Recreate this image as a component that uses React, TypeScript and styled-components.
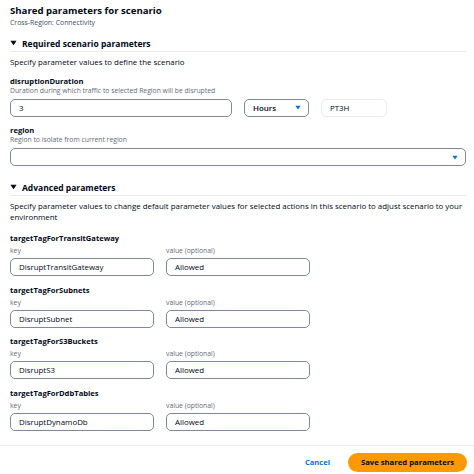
import React from 'react';
import styled, { createGlobalStyle } from 'styled-components';

const GlobalStyle = createGlobalStyle`
  html, body {
    margin: 0;
    padding: 0;
    background: #ffffff;
  }
  body {
    font-family: "Open Sans", "Noto Sans", sans-serif;
    color: #000716;
  }
`;

const Page = styled.div`
  width: 474px;
  height: 474px;
  overflow: hidden;
  display: flex;
  flex-direction: column;
`;

const Body = styled.div`
  padding: 4px 8px 0 10px;
  flex: 1;
`;

const Title = styled.h1`
  margin: 0;
  font-size: 9.6px;
  line-height: 14px;
  font-weight: 700;
`;

const Subtitle = styled.div`
  font-size: 6.9px;
  line-height: 9px;
  color: #414d5c;
`;

const SectionHeader = styled.div<{ $top: number }>`
  margin-top: ${(p) => p.$top}px;
  display: flex;
  align-items: center;
  gap: 5px;
  height: 12px;
  font-size: 8.5px;
  font-weight: 700;
  padding-bottom: 2px;
  border-bottom: 1px solid #e9ebed;
`;

const Caret = styled.svg`
  width: 7px;
  height: 6px;
  flex: none;
`;

const Description = styled.p`
  margin: 5px 0 0;
  font-size: 7.9px;
  line-height: 11px;
`;

const Field = styled.div<{ $top: number }>`
  margin-top: ${(p) => p.$top}px;
`;

const Label = styled.div`
  font-size: 7.6px;
  line-height: 10px;
  font-weight: 700;
`;

const Help = styled.div`
  font-size: 6.8px;
  line-height: 10px;
  color: #5f6b7a;
`;

const Row = styled.div`
  display: flex;
  align-items: center;
  gap: 12px;
  margin-top: 3px;
`;

const Input = styled.div<{ $w: number; $muted?: boolean }>`
  box-sizing: border-box;
  width: ${(p) => p.$w}px;
  height: 18px;
  border: 1px solid ${(p) => (p.$muted ? '#e9ebed' : '#7d8998')};
  border-radius: 5px;
  padding: 0 8px;
  display: flex;
  align-items: center;
  font-size: 7.9px;
  font-weight: 500;
  color: #000716;
`;

const Select = styled(Input)`
  justify-content: space-between;
  padding-right: 7px;
  font-weight: 600;
`;

const SelectCaret = () => (
  <Caret viewBox="0 0 8 6" style={{ width: 6, height: 5 }}>
    <path d="M0.5 0.5 L7.5 0.5 L4 5.5 Z" fill="#0972d3" />
  </Caret>
);

const TagGroup = styled.div<{ $top: number }>`
  margin-top: ${(p) => p.$top}px;
`;

const TagCols = styled.div`
  display: grid;
  grid-template-columns: 144px 144px;
  column-gap: 12px;
`;

const SmallLabel = styled.div`
  font-size: 6.8px;
  line-height: 9px;
  color: #5f6b7a;
  margin-top: 3px;
  margin-bottom: 3px;
`;

const Footer = styled.div`
  box-sizing: border-box;
  border-top: 1px solid #e9ebed;
  height: 29px;
  padding: 4px 7px 0 0;
  display: flex;
  align-items: center;
  justify-content: flex-end;
  gap: 18px;
`;

const LinkButton = styled.button`
  background: none;
  border: none;
  padding: 0;
  font-family: inherit;
  font-size: 7.6px;
  font-weight: 700;
  color: #0972d3;
`;

const PrimaryButton = styled.button`
  background: #ff9900;
  border: none;
  border-radius: 10px;
  height: 19px;
  width: 119px;
  padding: 0;
  font-family: inherit;
  font-size: 7.7px;
  font-weight: 700;
  color: #000716;
`;

const tags = [
  { name: 'targetTagForTransitGateway', key: 'DisruptTransitGateway' },
  { name: 'targetTagForSubnets', key: 'DisruptSubnet' },
  { name: 'targetTagForS3Buckets', key: 'DisruptS3' },
  { name: 'targetTagForDdbTables', key: 'DisruptDynamoDb' },
];

const Expand = () => (
  <Caret viewBox="0 0 8 6">
    <path d="M0.5 0.5 L7.5 0.5 L4 5.5 Z" fill="#000716" />
  </Caret>
);

export default function App() {
  return (
    <Page>
      <GlobalStyle />
      <Body>
        <Title>Shared parameters for scenario</Title>
        <Subtitle>Cross-Region: Connectivity</Subtitle>

        <SectionHeader $top={10}>
          <Expand />
          Required scenario parameters
        </SectionHeader>
        <Description>Specify parameter values to define the scenario</Description>

        <Field $top={7.5}>
          <Label>disruptionDuration</Label>
          <Help>Duration during which traffic to selected Region will be disrupted</Help>
          <Row>
            <Input $w={222}>3</Input>
            <Select $w={65}>
              Hours
              <SelectCaret />
            </Select>
            <Input $w={66} $muted>PT3H</Input>
          </Row>
        </Field>

        <Field $top={8.5}>
          <Label>region</Label>
          <Help>Region to isolate from current region</Help>
          <Row>
            <Select $w={456}>
              <span />
              <SelectCaret />
            </Select>
          </Row>
        </Field>

        <SectionHeader $top={15}>
          <Expand />
          Advanced parameters
        </SectionHeader>
        <Description>
          Specify parameter values to change default parameter values for selected actions in this scenario to adjust scenario to your
          environment
        </Description>

        {tags.map((t, i) => (
          <TagGroup key={t.name} $top={i === 0 ? 10 : 8.5}>
            <Label>{t.name}</Label>
            <TagCols>
              <div>
                <SmallLabel>key</SmallLabel>
                <Input $w={144}>{t.key}</Input>
              </div>
              <div>
                <SmallLabel>value (optional)</SmallLabel>
                <Input $w={144}>Allowed</Input>
              </div>
            </TagCols>
          </TagGroup>
        ))}
      </Body>
      <Footer>
        <LinkButton>Cancel</LinkButton>
        <PrimaryButton>Save shared parameters</PrimaryButton>
      </Footer>
    </Page>
  );
}
